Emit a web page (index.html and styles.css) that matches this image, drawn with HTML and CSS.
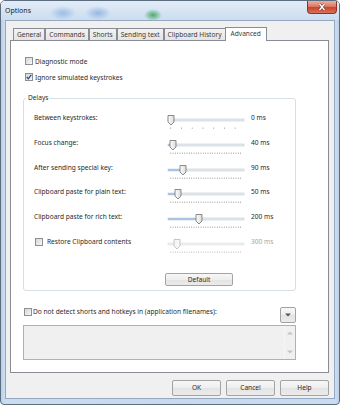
FILE: index.html
```html
<!DOCTYPE html>
<html>
<head>
<meta charset="utf-8">
<title>Options</title>
<link rel="stylesheet" href="styles.css">
</head>
<body>
<svg class="defs" width="0" height="0">
  <defs>
    <linearGradient id="tg" x1="0" y1="0" x2="1" y2="0">
      <stop offset="0" stop-color="#fdfdfd"/>
      <stop offset="1" stop-color="#dcdcdc"/>
    </linearGradient>
    <path id="th" d="M-3 3.5h6v6.5l-3 3l-3-3z" fill="url(#tg)" stroke="#6f6f6f" stroke-width="0.8"/>
    <path id="thd" d="M-3 3.5h6v6.5l-3 3l-3-3z" fill="#f6f6f6" stroke="#b9b9b9" stroke-width="0.8"/>
  </defs>
</svg>
<div class="window">
  <div class="titlebar">
    <span class="title">Options</span>
    <div class="close">
      <svg width="10" height="8" viewBox="0 0 10 8"><path d="M2.5 1l5 6M7.5 1l-5 6" class="xs"/><path d="M2.5 1l5 6M7.5 1l-5 6" class="xg"/></svg>
    </div>
  </div>
  <div class="client">
    <div class="tabs">
      <div class="tab">General</div>
      <div class="tab">Commands</div>
      <div class="tab">Shorts</div>
      <div class="tab">Sending text</div>
      <div class="tab">Clipboard History</div>
      <div class="tab active">Advanced</div>
    </div>
    <div class="panel">
      <div class="check"><span class="box"></span><span>Diagnostic mode</span></div>
      <div class="check"><span class="box"><svg width="6" height="6" viewBox="0 0 6 6"><path d="M0.8 3l1.5 1.8L5.3 0.8" class="tick"/></svg></span><span>Ignore simulated keystrokes</span></div>
      <fieldset class="group">
        <legend>Delays</legend>
        <div class="row">
          <span class="lbl">Between keystrokes:</span>
          <svg class="slider" width="80" height="18" viewBox="0 0 80 18"><rect x="2" y="7" width="76" height="2" class="trk"/><line x1="4.3" y1="16.2" x2="75" y2="16.2" class="tk tk7"/><use href="#th" x="5"/></svg>
          <span class="val">0 ms</span>
        </div>
        <div class="row">
          <span class="lbl">Focus change:</span>
          <svg class="slider" width="80" height="18" viewBox="0 0 80 18"><rect x="2" y="7" width="76" height="2" class="trk"/><rect x="2" y="7" width="5" height="2" class="fill"/><line x1="4.3" y1="16.2" x2="75.5" y2="16.2" class="tk"/><use href="#th" x="7"/></svg>
          <span class="val">40 ms</span>
        </div>
        <div class="row">
          <span class="lbl">After sending special key:</span>
          <svg class="slider" width="80" height="18" viewBox="0 0 80 18"><rect x="2" y="7" width="76" height="2" class="trk"/><rect x="2" y="7" width="15" height="2" class="fill"/><line x1="4.3" y1="16.2" x2="75.5" y2="16.2" class="tk"/><use href="#th" x="17"/></svg>
          <span class="val">90 ms</span>
        </div>
        <div class="row">
          <span class="lbl">Clipboard paste for plain text:</span>
          <svg class="slider" width="80" height="18" viewBox="0 0 80 18"><rect x="2" y="7" width="76" height="2" class="trk"/><rect x="2" y="7" width="10" height="2" class="fill"/><line x1="4.3" y1="16.2" x2="75.5" y2="16.2" class="tk"/><use href="#th" x="12"/></svg>
          <span class="val">50 ms</span>
        </div>
        <div class="row">
          <span class="lbl">Clipboard paste for rich text:</span>
          <svg class="slider" width="80" height="18" viewBox="0 0 80 18"><rect x="2" y="7" width="76" height="2" class="trk"/><rect x="2" y="7" width="31" height="2" class="fill"/><line x1="4.3" y1="16.2" x2="75.5" y2="16.2" class="tk"/><use href="#th" x="33"/></svg>
          <span class="val">200 ms</span>
        </div>
        <div class="row">
          <span class="lbl restore"><span class="box"></span><span>Restore Clipboard contents</span></span>
          <svg class="slider" width="80" height="18" viewBox="0 0 80 18"><rect x="2" y="7" width="76" height="2" class="trk dis"/><line x1="4.3" y1="16.2" x2="75.5" y2="16.2" class="tk dis"/><use href="#thd" x="11"/></svg>
          <span class="val disabled">300 ms</span>
        </div>
        <button class="btn default">Default</button>
      </fieldset>
      <div class="exclude">
        <div class="check ex"><span class="box"></span><span>Do not detect shorts and hotkeys in (application filenames):</span></div>
        <button class="btn drop"><svg width="6" height="4" viewBox="0 0 6 4"><path d="M0 0.5h6L3 3.5z" fill="#555"/></svg></button>
      </div>
      <div class="listbox">
        <div class="sb">
          <svg width="6" height="4" viewBox="0 0 6 4"><path d="M0 3.5h6L3 0.5z" fill="#c4c4c4"/></svg>
          <svg width="6" height="4" viewBox="0 0 6 4"><path d="M0 0.5h6L3 3.5z" fill="#c4c4c4"/></svg>
        </div>
      </div>
    </div>
    <div class="buttons">
      <button class="btn act">OK</button>
      <button class="btn act">Cancel</button>
      <button class="btn act">Help</button>
    </div>
  </div>
</div>
</body>
</html>
```
FILE: styles.css
```css
* { box-sizing: border-box; }
html, body { margin: 0; padding: 0; background: #ffffff; }
body {
  font-family: "Noto Sans", "DejaVu Sans", sans-serif;
  font-size: 6.6px;
  color: #2a2a2a;
  width: 340px;
  height: 405px;
  overflow: hidden;
}
.defs { display: block; width: 0; height: 0; overflow: hidden; }

.window {
  width: 340px;
  height: 405px;
  border: 1px solid #5d6d80;
  border-radius: 5px 5px 4px 4px;
  background: linear-gradient(90deg, #b9cfe8 0, #cadcf0 3px, #c6d9ee 50%, #cadcf0 calc(100% - 3px), #b9cfe8 100%);
  display: flex;
  flex-direction: column;
  overflow: hidden;
}
.titlebar {
  height: 19px;
  display: flex;
  align-items: flex-start;
  background:
    radial-gradient(ellipse 9px 6px at 152px 14px, rgba(52, 160, 80, 0.85), rgba(52, 160, 80, 0)),
    radial-gradient(ellipse 13px 7px at 62px 12px, rgba(110, 160, 215, 0.55), rgba(110, 160, 215, 0)),
    radial-gradient(ellipse 13px 7px at 97px 12px, rgba(100, 150, 210, 0.55), rgba(100, 150, 210, 0)),
    linear-gradient(#e2ecf7, #cbddf0);
}
.title {
  padding: 4px 0 0 4px;
  line-height: 11px;
  font-size: 7px;
  color: #1b1b1b;
}
.close {
  margin-left: auto;
  margin-right: 2px;
  width: 30px;
  height: 13px;
  border: 1px solid #8b3325;
  border-top: 0;
  border-radius: 0 0 4px 4px;
  background: linear-gradient(#eab0a4 0, #dc7a66 45%, #c9442c 55%, #d8735a 100%);
  display: flex;
  align-items: center;
  justify-content: center;
}
.xs { stroke: #6a2417; stroke-width: 2.6; fill: none; }
.xg { stroke: #ffffff; stroke-width: 1.5; fill: none; }

.client {
  margin: 0 4px 5px;
  flex: 1;
  background: #f0f0f0;
  border: 1px solid #94a8c0;
  display: flex;
  flex-direction: column;
}

.tabs {
  display: flex;
  align-items: flex-end;
  height: 13px;
  margin: 6px 0 0 7px;
}
.tab {
  height: 12px;
  line-height: 11px;
  padding: 0 3px;
  border: 1px solid #898c95;
  border-bottom: 0;
  background: linear-gradient(#f3f3f3, #e4e4e4);
  color: #3a3a3a;
  white-space: nowrap;
}
.tab.active {
  position: relative;
  z-index: 1;
  height: 14px;
  margin-bottom: -1px;
  margin-left: -1px;
  padding: 0 5px;
  line-height: 12px;
  background: #ffffff;
}

.panel {
  margin: 0 5px 0 4px;
  background: #ffffff;
  border: 1px solid #898c95;
  padding: 12px 32px 12px 12px;
  display: flex;
  flex-direction: column;
}
.check {
  display: flex;
  align-items: center;
  height: 16px;
  gap: 2px;
  padding-left: 2px;
  white-space: nowrap;
}
.box {
  width: 8px;
  height: 8px;
  flex: none;
  border: 1px solid #8f8f8f;
  background: linear-gradient(135deg, #d6d6d6, #f7f7f7);
  display: flex;
  align-items: center;
  justify-content: center;
}
.tick { stroke: #33447a; stroke-width: 1.3; fill: none; }

.group {
  margin: 8px 0 0;
  padding: 9px 0 4px 10px;
  border: 1px solid #d5dfe5;
  border-radius: 3px;
  min-width: 0;
  display: flex;
  flex-direction: column;
  align-items: flex-start;
}
.group legend {
  padding: 0 2px;
  margin-left: -8px;
  line-height: 10px;
}
.row {
  display: grid;
  grid-template-columns: 132px 80px 1fr;
  align-items: start;
  height: 24.8px;
  width: 100%;
}
.lbl { line-height: 12px; white-space: nowrap; }
.restore { display: flex; align-items: center; gap: 4px; padding-left: 1px; }
.slider { display: block; }
.trk { fill: #e9edf1; stroke: #b8c1ca; stroke-width: 0.5; }
.trk.dis { fill: #f1f3f5; stroke: #d3d8dd; }
.fill { fill: #a9c3e2; }
.tk { stroke: #a9a9a9; stroke-width: 1.4; stroke-dasharray: 0.8 1.53; }
.tk7 { stroke-dasharray: 0.8 9.95; }
.tk.dis { stroke: #c6c6c6; }
.val { line-height: 12px; padding-left: 5px; white-space: nowrap; }
.val.disabled { color: #a5a5a5; }

.btn {
  font: inherit;
  color: #2a2a2a;
  padding: 0;
  border: 1px solid #a3a3a3;
  border-radius: 2px;
  background: linear-gradient(#f7f7f7 0, #eeeeee 50%, #e3e3e3 51%, #ebebeb 100%);
  display: flex;
  align-items: center;
  justify-content: center;
}
.default {
  margin: 12px 0 0 131px;
  width: 68px;
  height: 13px;
}
.exclude {
  display: flex;
  justify-content: space-between;
  align-items: flex-start;
  height: 16px;
  margin-top: 16px;
}
.check.ex { height: 12px; margin-top: -1px; padding-left: 1px; gap: 1px; }
.drop { width: 16px; height: 16px; }
.listbox {
  margin-top: 2px;
  height: 35px;
  border: 1px solid #adb2b7;
  background: #f0f0f0;
  display: flex;
  justify-content: flex-end;
}
.sb {
  width: 11px;
  display: flex;
  flex-direction: column;
  justify-content: space-between;
  align-items: center;
  padding: 5px 0 5px;
  border-left: 1px solid #f6f6f6;
}

.buttons {
  display: flex;
  justify-content: flex-end;
  gap: 5px;
  margin: 7px 5px 0 0;
}
.act { width: 49px; height: 16px; }
```
